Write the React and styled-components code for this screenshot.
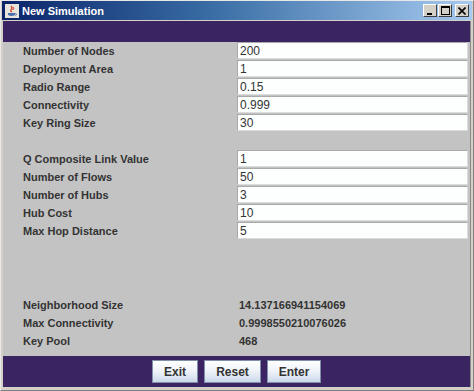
import styled, { createGlobalStyle } from "styled-components";

const Global = createGlobalStyle`
  html, body { margin: 0; padding: 0; background: #d4d0c8; }
  * { box-sizing: border-box; }
`;

const Window = styled.div`
  width: 474px;
  height: 391px;
  background: #d4d0c8;
  border: 1px solid #808080;
  border-top-color: #e8e8e8;
  border-left-color: #e8e8e8;
  display: flex;
  flex-direction: column;
  font-family: "Liberation Sans", Arial, sans-serif;
  overflow: hidden;
`;

const TitleBar = styled.div`
  height: 19px;
  margin: 0 1px;
  background: linear-gradient(to right, #0a246a 0%, #3a6ea5 45%, #a6caf0 100%);
  display: flex;
  align-items: center;
  padding: 0 3px 0 3px;
  gap: 3px;
`;

const Title = styled.span`
  color: #fff;
  font-size: 11px;
  font-weight: bold;
  flex: 1;
`;

const CtrlGroup = styled.div`
  display: flex;
  gap: 1px;
`;

const CtrlBtn = styled.div`
  width: 14px;
  height: 13px;
  background: #d4d0c8;
  border: 1px solid #404040;
  border-top-color: #fff;
  border-left-color: #fff;
  display: flex;
  align-items: center;
  justify-content: center;
  margin-left: ${(p) => (p.$gap ? "2px" : "0")};
`;

const Body = styled.div`
  flex: 1;
  margin: 1px 2px 3px 2px;
  display: flex;
  flex-direction: column;
  border-right: 1px solid #8a8a8a;
`;

const Band = styled.div`
  background: #3b2462;
  height: ${(p) => p.$h}px;
  display: flex;
  align-items: center;
  justify-content: center;
  gap: 6px;
`;

const Content = styled.div`
  flex: 1;
  background: #c3c3c3;
  padding: 0 2px 0 20px;
  display: flex;
  flex-direction: column;
`;

const Group = styled.div`
  display: flex;
  flex-direction: column;
  gap: 1px;
  margin-top: ${(p) => p.$top || 0}px;
`;

const Row = styled.div`
  display: grid;
  grid-template-columns: 214px 1fr;
  align-items: center;
  height: 17px;
`;

const Label = styled.span`
  font-size: 11px;
  font-weight: bold;
  color: #333;
`;

const Field = styled.div`
  height: 17px;
  background: #fdfefe;
  border: 1px solid #a9a9a9;
  border-right-color: #dcdcdc;
  border-bottom-color: #dcdcdc;
  font-size: 12px;
  color: #333;
  padding: 1px 2px;
  line-height: 14px;
`;

const Value = styled.span`
  font-size: 11px;
  font-weight: bold;
  color: #333;
  padding-left: 2px;
`;

const Button = styled.div`
  height: 23px;
  width: ${(p) => p.$w}px;
  background: linear-gradient(to bottom, #ffffff 0%, #eef2f8 50%, #ccd9ea 100%);
  border: 1px solid #8090a8;
  font-size: 12px;
  font-weight: bold;
  color: #333;
  display: flex;
  align-items: center;
  justify-content: center;
`;

const inputs1 = [
  ["Number of Nodes", "200"],
  ["Deployment Area", "1"],
  ["Radio Range", "0.15"],
  ["Connectivity", "0.999"],
  ["Key Ring Size", "30"],
];

const inputs2 = [
  ["Q Composite Link Value", "1"],
  ["Number of Flows", "50"],
  ["Number of Hubs", "3"],
  ["Hub Cost", "10"],
  ["Max Hop Distance", "5"],
];

const results = [
  ["Neighborhood Size", "14.137166941154069"],
  ["Max Connectivity", "0.9998550210076026"],
  ["Key Pool", "468"],
];

function JavaIcon() {
  return (
    <svg width="14" height="14" viewBox="0 0 14 14">
      <rect x="0" y="0" width="14" height="14" fill="#e8e4dc" />
      <path d="M3 9 h7 v2 q-3.5 2 -7 0z" fill="#4a6fb0" />
      <path d="M10 9.5 q2 0 1.5 1.2 q-0.4 0.8 -1.5 0.6" fill="none" stroke="#4a6fb0" strokeWidth="0.8" />
      <path d="M6 2 q2 2 0 4 q-1 1 1 2" fill="none" stroke="#d0402a" strokeWidth="1.2" />
      <path d="M8 3 q1.5 1.5 0 3" fill="none" stroke="#d0402a" strokeWidth="1" />
    </svg>
  );
}

export default function App() {
  return (
    <>
      <Global />
      <Window>
        <TitleBar>
          <JavaIcon />
          <Title>New Simulation</Title>
          <CtrlGroup>
            <CtrlBtn>
              <svg width="8" height="8" viewBox="0 0 8 8"><rect x="1" y="6" width="5" height="2" fill="#000" /></svg>
            </CtrlBtn>
            <CtrlBtn>
              <svg width="9" height="9" viewBox="0 0 9 9"><rect x="0.5" y="0.5" width="8" height="8" fill="none" stroke="#000" /><rect x="0" y="0" width="9" height="2" fill="#000" /></svg>
            </CtrlBtn>
            <CtrlBtn $gap>
              <svg width="8" height="8" viewBox="0 0 8 8"><path d="M0.5 0.5 L7.5 7.5 M7.5 0.5 L0.5 7.5" stroke="#000" strokeWidth="1.6" /></svg>
            </CtrlBtn>
          </CtrlGroup>
        </TitleBar>
        <Body>
          <Band $h={21} />
          <Content>
            <Group>
              {inputs1.map(([l, v]) => (
                <Row key={l}>
                  <Label>{l}</Label>
                  <Field>{v}</Field>
                </Row>
              ))}
            </Group>
            <Group $top={19}>
              {inputs2.map(([l, v]) => (
                <Row key={l}>
                  <Label>{l}</Label>
                  <Field>{v}</Field>
                </Row>
              ))}
            </Group>
            <Group $top={57}>
              {results.map(([l, v]) => (
                <Row key={l}>
                  <Label>{l}</Label>
                  <Value>{v}</Value>
                </Row>
              ))}
            </Group>
          </Content>
          <Band $h={31}>
            <Button $w={46}>Exit</Button>
            <Button $w={57}>Reset</Button>
            <Button $w={54}>Enter</Button>
          </Band>
        </Body>
      </Window>
    </>
  );
}
